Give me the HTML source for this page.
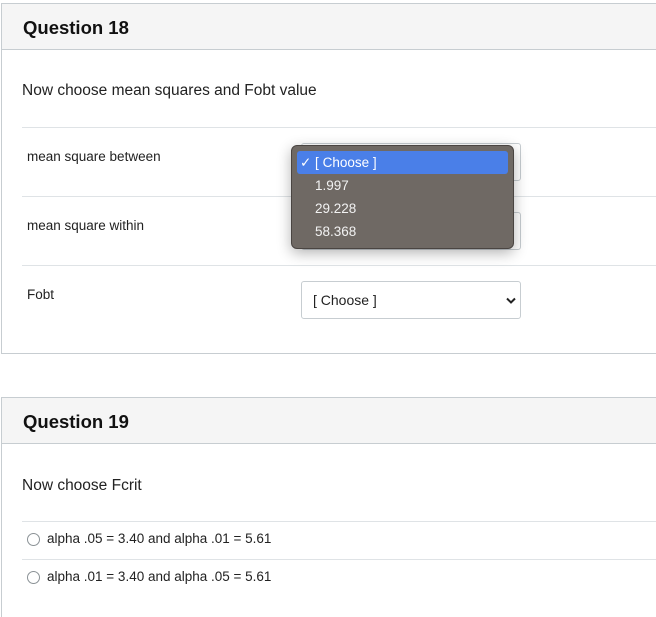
<!DOCTYPE html>
<html style="overflow:hidden;height:617px"><head><style>
*{margin:0;padding:0;box-sizing:border-box}
body{width:656px;height:617px;overflow:hidden;background:#fff;font-family:"Liberation Sans",sans-serif;color:#222;position:relative}
.a{position:absolute}
.box{position:absolute;left:1px;width:655px;border:1px solid #c7cdd1;border-right:none}
.hdr{height:46px;background:#f5f5f5;border-bottom:1px solid #c7cdd1;font-weight:bold;font-size:18.5px;color:#111;padding:13px 0 0 21px}
.line{position:absolute;left:22px;width:634px;height:1px;background:#dfe3e6}
.sel{position:absolute;left:301px;width:220px;height:38px;border:1px solid #c7cdd1;border-radius:3px;background:#fff;font-size:14px;color:#222;padding:10px 0 0 11px}
.lbl{position:absolute;left:27px;font-size:13.5px;color:#222}
.rad{position:absolute;left:27px;width:13px;height:13px;border:1px solid #8b9296;border-radius:50%}
.rt{position:absolute;left:47px;font-size:13.5px}
</style></head><body>
<div class="box" style="top:3px;height:351px">
<div class="hdr">Question 18</div>
</div>
<div class="a" style="left:22px;top:82px;font-size:15.5px">Now choose mean squares and Fobt value</div>
<div class="line" style="top:127px"></div>
<div class="line" style="top:196px"></div>
<div class="line" style="top:265px"></div>
<div class="lbl" style="top:149px">mean square between</div>
<div class="lbl" style="top:218px">mean square within</div>
<div class="lbl" style="top:287px">Fobt</div>
<div class="sel" style="top:143px"></div>
<div class="sel" style="top:212px"></div>
<div class="sel" style="top:281px">[ Choose ]<svg class="a" style="left:204px;top:15px" width="10" height="8" viewBox="0 0 10 8"><path d="M1 1.5 L5 5.5 L9 1.5" fill="none" stroke="#222" stroke-width="2"/></svg></div>
<div class="a" style="left:291px;top:145px;width:223px;height:104px;background:#6f6964;border:1px solid #4a4542;border-radius:6px;box-shadow:0 4px 14px rgba(0,0,0,0.3)"></div>
<div class="a" style="left:297px;top:151px;width:211px;height:23px;background:#4a7fe8;border-radius:3px"></div>
<div class="a" style="left:300px;top:155px;font-size:13.5px;color:#fff">✓ [ Choose ]</div>
<div class="a" style="left:315px;top:178px;font-size:13.5px;color:#f2f2f2">1.997</div>
<div class="a" style="left:315px;top:201px;font-size:13.5px;color:#f2f2f2">29.228</div>
<div class="a" style="left:315px;top:224px;font-size:13.5px;color:#f2f2f2">58.368</div>
<div class="box" style="top:397px;height:220px;border-bottom:none">
<div class="hdr">Question 19</div>
</div>
<div class="a" style="left:22px;top:477px;font-size:15.5px">Now choose Fcrit</div>
<div class="line" style="top:521px"></div>
<div class="line" style="top:559px"></div>
<div class="rad" style="top:533px"></div>
<div class="rt" style="top:531px">alpha .05 = 3.40 and alpha .01 = 5.61</div>
<div class="rad" style="top:571px"></div>
<div class="rt" style="top:569px">alpha .01 = 3.40 and alpha .05 = 5.61</div>
</body></html>
